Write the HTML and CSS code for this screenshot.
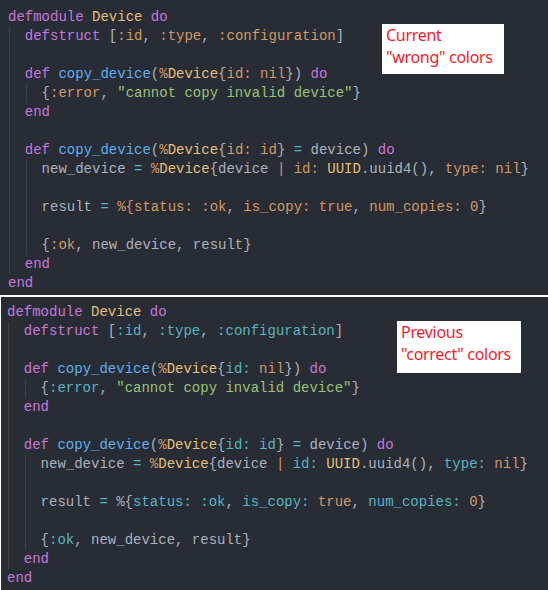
FILE: index.html
```html
<!DOCTYPE html>
<html>
<head>
<meta charset="utf-8">
<link rel="stylesheet" href="styles.css">
</head>
<body>
<div class="panel top">
  <div class="line"><span class="k">defmodule</span> <span class="m">Device</span> <span class="k">do</span></div>
  <div class="indent">
    <div class="line"><span class="k">defstruct</span> [<span class="o">:id</span>, <span class="o">:type</span>, <span class="o">:configuration</span>]</div>
    <div class="line"></div>
    <div class="line"><span class="k">def</span> <span class="f">copy_device</span>(<span class="o">%</span><span class="m">Device</span>{<span class="o">id:</span> <span class="o">nil</span>}) <span class="k">do</span></div>
    <div class="indent">
      <div class="line">{<span class="o">:error</span>, <span class="s">"cannot copy invalid device"</span>}</div>
    </div>
    <div class="line"><span class="k">end</span></div>
    <div class="line"></div>
    <div class="line"><span class="k">def</span> <span class="f">copy_device</span>(<span class="o">%</span><span class="m">Device</span>{<span class="o">id:</span> <span class="o">id</span>} <span class="c">=</span> device) <span class="k">do</span></div>
    <div class="indent">
      <div class="line">new_device <span class="c">=</span> <span class="o">%</span><span class="m">Device</span>{device <span class="o">|</span> <span class="o">id:</span> <span class="m">UUID</span>.uuid4(), <span class="o">type:</span> <span class="o">nil</span>}</div>
      <div class="line"></div>
      <div class="line">result <span class="c">=</span> <span class="o">%{status: :ok</span>, <span class="o">is_copy: true</span>, <span class="o">num_copies: 0</span>}</div>
      <div class="line"></div>
      <div class="line">{<span class="o">:ok</span>, new_device, result}</div>
    </div>
    <div class="line"><span class="k">end</span></div>
  </div>
  <div class="line"><span class="k">end</span></div>
  <div class="note note-top">Current<br>"wrong" colors</div>
</div>
<div class="panel bottom">
  <div class="line"><span class="k">defmodule</span> <span class="m">Device</span> <span class="k">do</span></div>
  <div class="indent">
    <div class="line"><span class="k">defstruct</span> [<span class="c">:id</span>, <span class="c">:type</span>, <span class="c">:configuration</span>]</div>
    <div class="line"></div>
    <div class="line"><span class="k">def</span> <span class="f">copy_device</span>(<span class="o">%</span><span class="m">Device</span>{<span class="c">id:</span> <span class="o">nil</span>}) <span class="k">do</span></div>
    <div class="indent">
      <div class="line">{<span class="c">:error</span>, <span class="s">"cannot copy invalid device"</span>}</div>
    </div>
    <div class="line"><span class="k">end</span></div>
    <div class="line"></div>
    <div class="line"><span class="k">def</span> <span class="f">copy_device</span>(<span class="o">%</span><span class="m">Device</span>{<span class="c">id:</span> <span class="c">id</span>} <span class="c">=</span> device) <span class="k">do</span></div>
    <div class="indent">
      <div class="line">new_device <span class="c">=</span> <span class="o">%</span><span class="m">Device</span>{device <span class="o">|</span> <span class="c">id:</span> <span class="m">UUID</span>.uuid4(), <span class="c">type:</span> <span class="o">nil</span>}</div>
      <div class="line"></div>
      <div class="line">result <span class="c">=</span> %{<span class="c">status:</span> <span class="c">:ok</span>, <span class="c">is_copy:</span> <span class="o">true</span>, <span class="c">num_copies:</span> <span class="o">0</span>}</div>
      <div class="line"></div>
      <div class="line">{<span class="c">:ok</span>, new_device, result}</div>
    </div>
    <div class="line"><span class="k">end</span></div>
  </div>
  <div class="line"><span class="k">end</span></div>
  <div class="note note-bottom">Previous<br>"correct" colors</div>
</div>
</body>
</html>
```
FILE: styles.css
```css
html, body {
  margin: 0;
  padding: 0;
  background: #282c34;
}
body {
  width: 548px;
  height: 590px;
  overflow: hidden;
}
.panel {
  position: relative;
  box-sizing: border-box;
  background: #282c34;
  color: #abb2bf;
  font-family: "Liberation Mono", monospace;
  font-size: 14px;
  overflow: hidden;
}
.top {
  height: 295px;
  padding: 8px 0 0 8px;
}
.bottom {
  height: 295px;
  border-top: 2px solid #ffffff;
  border-left: 1px solid #ffffff;
  padding: 6px 0 0 6px;
}
.line {
  height: 19px;
  line-height: 19px;
  white-space: pre;
}
.indent {
  margin-left: 1px;
  border-left: 1px solid #3b4048;
  padding-left: calc(2ch - 2px);
}
.k { color: #c678dd; }
.m { color: #e5c07b; }
.f { color: #61afef; }
.s { color: #98c379; }
.o { color: #d19a66; }
.c { color: #56b6c2; }
.note {
  position: absolute;
  background: #ffffff;
  color: #f01c2c;
  font-family: "Noto Sans", "Open Sans", sans-serif;
  font-size: 16px;
  line-height: 22px;
  letter-spacing: -0.3px;
  padding: 0 4px;
  box-sizing: border-box;
  white-space: nowrap;
}
.note-top {
  left: 382px;
  top: 24px;
  width: 122px;
  height: 50px;
}
.note-bottom {
  left: 396px;
  top: 24px;
  width: 124px;
  height: 52px;
}
```
